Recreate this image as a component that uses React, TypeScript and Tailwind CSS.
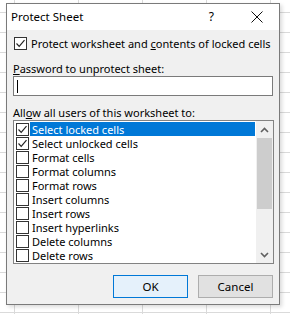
import React from "react";

function Check() {
  return (
    <svg width="11" height="11" viewBox="0 0 11 11" className="block">
      <polyline points="1.5,5.5 4.2,8.3 9.5,2.2" fill="none" stroke="#222" strokeWidth="1.2" />
    </svg>
  );
}

function Box({ checked }: { checked: boolean }) {
  return (
    <div className="w-[13px] h-[13px] border border-[#333] bg-white flex items-center justify-center shrink-0">
      {checked ? <Check /> : null}
    </div>
  );
}

const items: { label: string; checked: boolean; selected?: boolean }[] = [
  { label: "Select locked cells", checked: true, selected: true },
  { label: "Select unlocked cells", checked: true },
  { label: "Format cells", checked: false },
  { label: "Format columns", checked: false },
  { label: "Format rows", checked: false },
  { label: "Insert columns", checked: false },
  { label: "Insert rows", checked: false },
  { label: "Insert hyperlinks", checked: false },
  { label: "Delete columns", checked: false },
  { label: "Delete rows", checked: false },
];

export default function App() {
  return (
    <div
      className="w-[290px] h-[314px] overflow-hidden bg-white pt-[3px] pl-[6px] text-[11px] text-black whitespace-nowrap [background-image:linear-gradient(#dadada_1px,transparent_1px),linear-gradient(90deg,#dadada_1px,transparent_1px)] [background-size:64px_20px] [background-position:14px_12px]"
      style={{ fontFamily: '"Segoe UI", "Noto Sans", sans-serif' }}
    >
      <div className="w-[274px] h-[302px] border border-[#7a7a7a] bg-[#f0f0f0] flex flex-col shadow-[2px_2px_4px_rgba(0,0,0,0.15)]">
        {/* Title bar */}
        <div className="h-[26px] bg-white flex items-center pl-[4px] pb-[1px] shrink-0 text-[11.5px]">
          <span className="leading-none">Protect Sheet</span>
          <span className="ml-auto mr-[37px] leading-none text-[12px]">?</span>
          <svg width="12" height="12" viewBox="0 0 12 12" className="mr-[16px]">
            <path d="M0.5 0.5 L11.5 11.5 M11.5 0.5 L0.5 11.5" stroke="#111" strokeWidth="1" />
          </svg>
        </div>

        {/* Protect checkbox */}
        <div className="mt-[5px] h-[16px] flex items-center pl-[7px] gap-[4px]">
          <Box checked />
          <span className="leading-none">
            Protect worksheet and <span className="underline">c</span>ontents of locked cells
          </span>
        </div>

        {/* Password */}
        <div className="mt-[9px] h-[16px] flex items-center pl-[6px]">
          <span className="leading-none">
            <span className="underline">P</span>assword to unprotect sheet:
          </span>
        </div>
        <div className="ml-[6px] w-[260px] h-[20px] border border-[#7a7a7a] bg-white flex items-center pl-[3px]">
          <div className="w-[1px] h-[13px] bg-black" />
        </div>

        {/* Allow */}
        <div className="mt-[8px] h-[16px] flex items-center pl-[6px]">
          <span className="leading-none">
            All<span className="underline">o</span>w all users of this worksheet to:
          </span>
        </div>
        <div className="ml-[6px] w-[261px] h-[144px] border border-[#828282] bg-white flex">
          <div className="flex-1 flex flex-col pt-[1px]">
            {items.map((it) => (
              <div key={it.label} className="h-[14px] flex items-center pl-[2px]">
                <Box checked={it.checked} />
                <div
                  className={
                    it.selected
                      ? "ml-[1px] h-[14px] flex-1 bg-[#0078d7] text-white flex items-center pl-[2px] mr-[1px]"
                      : "ml-[1px] h-[14px] flex-1 flex items-center pl-[2px]"
                  }
                >
                  <span className="leading-none">{it.label}</span>
                </div>
              </div>
            ))}
          </div>
          {/* Scrollbar */}
          <div className="w-[17px] bg-[#f0f0f0] flex flex-col items-center">
            <div className="h-[17px] w-full flex items-center justify-center">
              <svg width="9" height="6" viewBox="0 0 9 6">
                <polyline points="1,5 4.5,1.5 8,5" fill="none" stroke="#606060" strokeWidth="1.6" />
              </svg>
            </div>
            <div className="w-[15px] h-[71px] bg-[#cdcdcd]" />
            <div className="flex-1" />
            <div className="h-[17px] w-full flex items-center justify-center">
              <svg width="9" height="6" viewBox="0 0 9 6">
                <polyline points="1,1 4.5,4.5 8,1" fill="none" stroke="#606060" strokeWidth="1.6" />
              </svg>
            </div>
          </div>
        </div>

        {/* Buttons */}
        <div className="mt-[11px] flex justify-end gap-[10px] mr-[6px] text-[11.5px]">
          <div className="w-[75px] h-[23px] border border-[#0078d7] bg-[#e5f1fb] flex items-center justify-center">
            <span className="leading-none">OK</span>
          </div>
          <div className="w-[75px] h-[23px] border border-[#adadad] bg-[#e1e1e1] flex items-center justify-center">
            <span className="leading-none">Cancel</span>
          </div>
        </div>
      </div>
    </div>
  );
}
